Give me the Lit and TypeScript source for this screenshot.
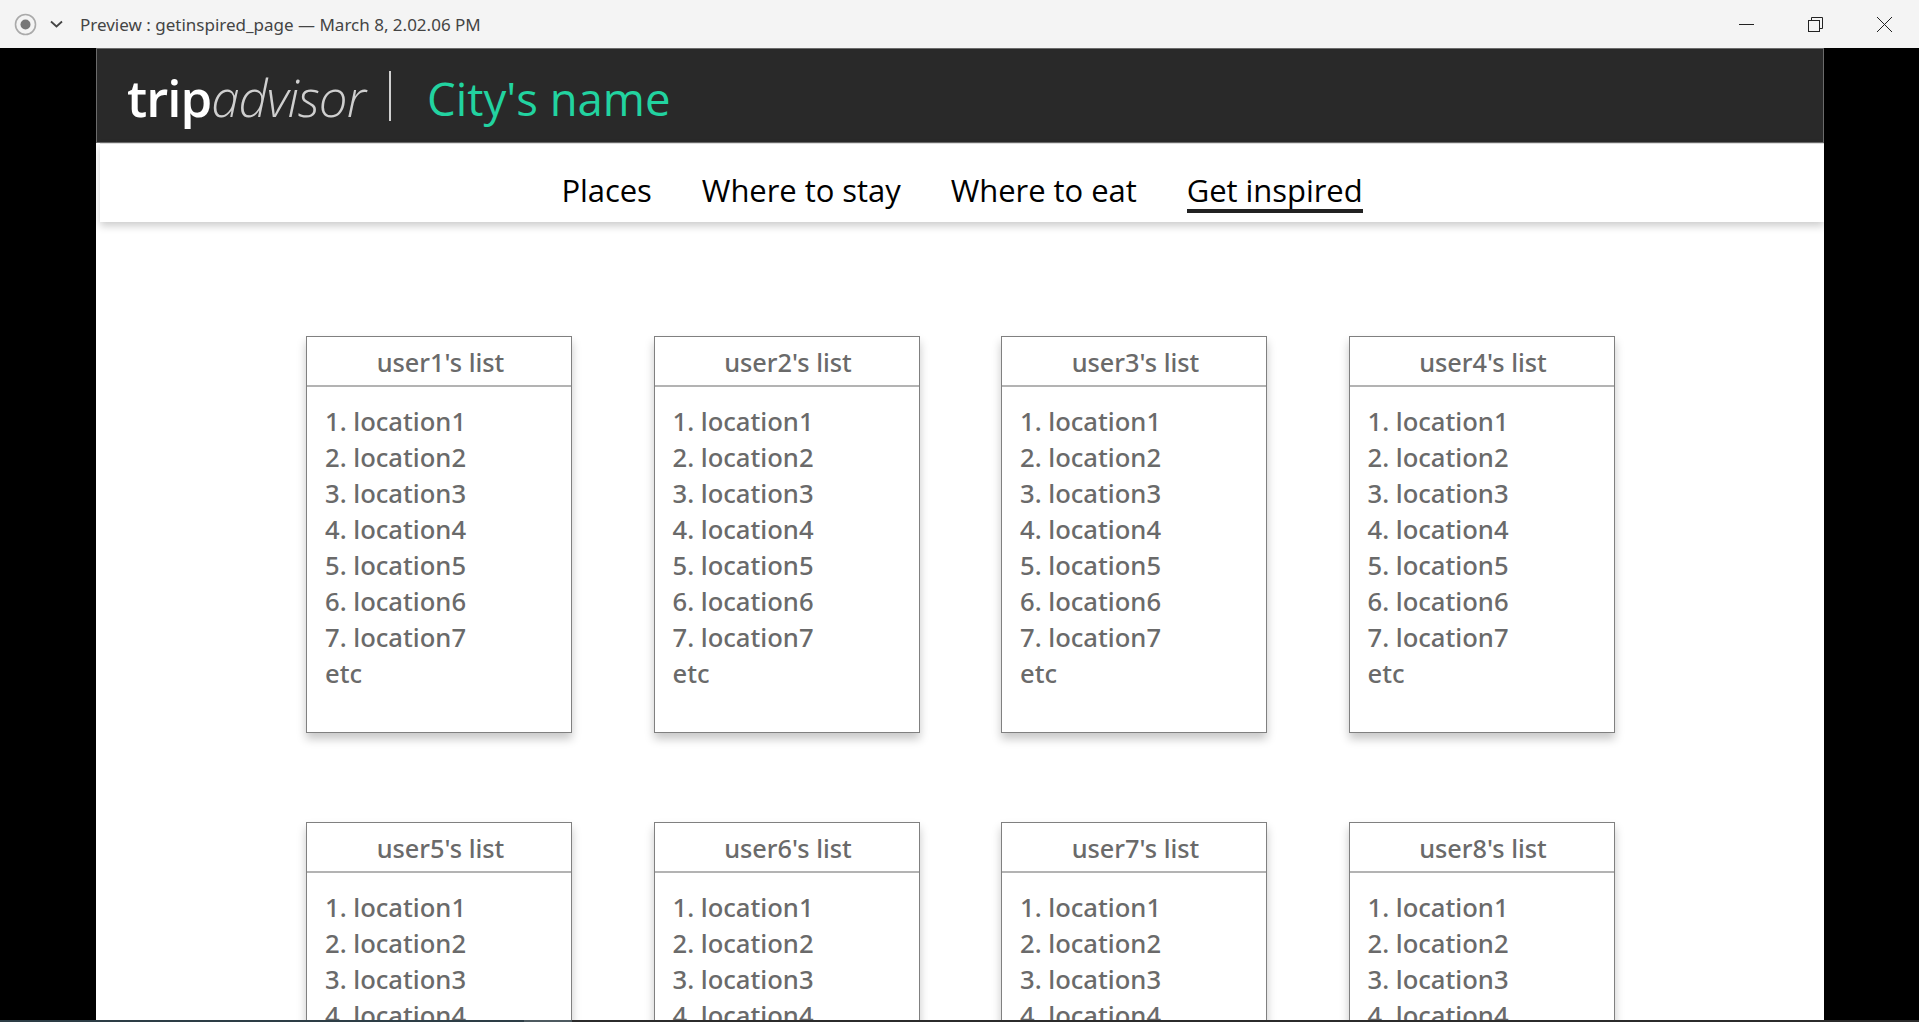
import { LitElement, html, css } from 'lit';
import { customElement } from 'lit/decorators.js';

const USERS = [1, 2, 3, 4, 5, 6, 7, 8];
const LOCATIONS = [1, 2, 3, 4, 5, 6, 7];
const NAV = ['Places', 'Where to stay', 'Where to eat', 'Get inspired'];

@customElement('app-root')
export class AppRoot extends LitElement {
  static override styles = css`
    :host {
      display: block;
      height: 1022px;
      overflow: hidden;
      position: relative;
      background: #000;
      font-family: 'Open Sans', 'Noto Sans', sans-serif;
    }

    .titlebar {
      height: 48px;
      background: #f4f4f4;
      display: flex;
      align-items: center;
      padding-left: 14px;
      color: #444;
      font-size: 17px;
      font-family: 'Noto Sans', sans-serif;
    }

    .titlebar .record {
      width: 23px;
      height: 23px;
      margin-right: 13px;
    }

    .titlebar .chev {
      width: 13px;
      height: 8px;
      margin-right: 17px;
    }

    .winbtns {
      margin-left: auto;
      display: flex;
      gap: 54px;
      padding-right: 27px;
    }

    .winbtns svg {
      width: 15px;
      height: 15px;
      display: block;
    }

    .page {
      width: 1728px;
      margin-left: 96px;
      height: 974px;
      background: #fff;
      overflow: hidden;
    }

    .brand {
      height: 95px;
      box-sizing: border-box;
      background: #292929;
      border: 1px solid #6b6b6b;
      display: flex;
      align-items: center;
      padding-left: 30px;
    }

    .logo {
      font-size: 51px;
      color: #fff;
      font-weight: 600;
      letter-spacing: -1px;
      line-height: 1;
      margin-top: 4px;
    }

    .logo em {
      font-weight: 300;
      color: #cfcfcf;
    }

    .sep {
      width: 2px;
      height: 50px;
      background: #cfcfcf;
      margin: 0 36px 0 24px;
    }

    .city {
      font-size: 45.5px;
      color: #22d3a0;
      line-height: 1;
      margin-top: 6px;
    }

    nav {
      height: 79px;
      margin-left: 4px;
      box-sizing: border-box;
      border-top: 1px solid #ddd;
      box-shadow: 0 4px 8px rgba(0, 0, 0, 0.2);
      display: flex;
      justify-content: center;
      align-items: flex-start;
      gap: 50px;
      padding: 28px 0 0 0;
      font-size: 31px;
      letter-spacing: -0.05px;
      color: #000;
      background: #fff;
    }

    nav span {
      line-height: 37px;
      height: 37px;
      white-space: nowrap;
    }

    nav span.active {
      border-bottom: 4px solid #222;
    }

    .grid {
      display: grid;
      grid-template-columns: repeat(4, 266px);
      column-gap: 81.5px;
      row-gap: 89px;
      padding: 114px 0 0 210px;
    }

    .card {
      height: 397px;
      box-sizing: border-box;
      border: 1px solid #808080;
      box-shadow: 0 6px 9px rgba(0, 0, 0, 0.22);
      background: #fff;
      color: #6a6a6a;
    }

    .card h2 {
      margin: 0;
      height: 50px;
      box-sizing: border-box;
      border-bottom: 2px solid #b3b3b3;
      padding-left: 3px;
      text-align: center;
      font-family: 'Noto Sans', sans-serif;
      font-size: 25.3px;
      font-weight: 500;
      line-height: 51px;
    }

    .card ol {
      list-style: none;
      margin: 0;
      padding: 17px 0 0 18px;
      font-family: 'Noto Sans', sans-serif;
      font-size: 25.6px;
      font-weight: 500;
      line-height: 36px;
    }

    .taskbar {
      position: absolute;
      left: 0;
      right: 0;
      bottom: 0;
      height: 2px;
      background: #2b2b2b;
      display: flex;
    }

    .taskbar i {
      display: block;
      height: 2px;
    }

    .taskbar .start {
      width: 524px;
      background: #2d3e46;
    }

    .taskbar .tab {
      width: 48px;
      background: #4d5a60;
    }
  `;

  private renderCard(user: number) {
    return html`
      <div class="card">
        <h2>user${user}'s list</h2>
        <ol>
          ${LOCATIONS.map((n) => html`<li>${n}. location${n}</li>`)}
          <li>etc</li>
        </ol>
      </div>
    `;
  }

  override render() {
    return html`
      <div class="titlebar">
        <svg class="record" viewBox="0 0 23 23">
          <circle cx="11.5" cy="11.5" r="10" fill="none" stroke="#aaa" stroke-width="1.6"></circle>
          <circle cx="11.5" cy="11.5" r="5" fill="#777"></circle>
        </svg>
        <svg class="chev" viewBox="0 0 13 8">
          <path d="M1 1.5 L6.5 6.5 L12 1.5" fill="none" stroke="#444" stroke-width="1.8"></path>
        </svg>
        <span>Preview : getinspired_page — March 8, 2.02.06 PM</span>
        <div class="winbtns">
          <svg viewBox="0 0 15 15"><path d="M0 7.5H15" stroke="#222" stroke-width="1"></path></svg>
          <svg viewBox="0 0 15 15">
            <path d="M3.5 3.5V.5H14.5V11.5H11.5" fill="none" stroke="#222"></path>
            <rect x=".5" y="3.5" width="11" height="11" fill="none" stroke="#222"></rect>
          </svg>
          <svg viewBox="0 0 15 15"><path d="M0 0L15 15M15 0L0 15" stroke="#222" stroke-width="1"></path></svg>
        </div>
      </div>
      <div class="page">
        <div class="brand">
          <span class="logo">trip<em>advisor</em></span>
          <span class="sep"></span>
          <span class="city">City's name</span>
        </div>
        <nav>
          ${NAV.map((item, i) => html`<span class=${i === 3 ? 'active' : ''}>${item}</span>`)}
        </nav>
        <div class="grid">${USERS.map((u) => this.renderCard(u))}</div>
      </div>
      <div class="taskbar"><i class="start"></i><i class="tab"></i></div>
    `;
  }
}
